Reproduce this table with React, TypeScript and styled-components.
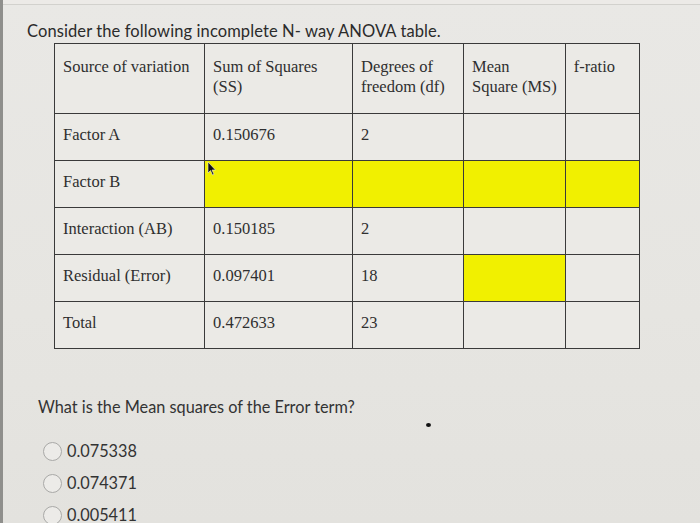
import React from "react";
import styled, { createGlobalStyle } from "styled-components";

const GlobalStyle = createGlobalStyle`
  html, body {
    margin: 0;
    padding: 0;
    background: #e6e5e1;
  }
`;

const Page = styled.div`
  position: relative;
  width: 697px;
  height: 523px;
  overflow: hidden;
  border-left: 3px solid #8f8f8c;
  background: linear-gradient(180deg, #e9e8e5 0%, #e6e5e1 60%, #e3e2de 100%);
  font-family: Lato, "Open Sans", sans-serif;
  color: #2b2b2b;
`;

const TopLine = styled.div`
  height: 4px;
  border-bottom: 1px solid #d2d1cd;
  background: #eceae7;
`;

const Title = styled.div`
  font-size: 16.5px;
  line-height: 20px;
  padding: 16px 0 0 24px;
  letter-spacing: 0.1px;
`;

const Table = styled.table`
  margin: 2px 0 0 51px;
  border-collapse: collapse;
  background: #ebeae6;
  font-family: "Liberation Serif", "Times New Roman", serif;
  font-size: 16.5px;
  line-height: 20px;
  color: #2f2f2f;
  table-layout: fixed;
`;

const Cell = styled.td<{ $hl?: boolean; $w?: number; $head?: boolean }>`
  width: ${(p) => (p.$w ? `${p.$w}px` : "auto")};
  height: ${(p) => (p.$head ? 70 : 47)}px;
  box-sizing: border-box;
  border: 1.5px solid #3a3a3a;
  background: ${(p) => (p.$hl ? "#f1f000" : "transparent")};
  vertical-align: top;
  white-space: nowrap;
  padding: ${(p) => (p.$head ? "13px 8px 0" : "11px 8px 0")};
`;

const Question = styled.div`
  margin: 48px 0 0 35px;
  font-size: 16.3px;
  line-height: 20px;
  color: #333;
`;

const Options = styled.div`
  margin: 24px 0 0 40px;
  display: flex;
  flex-direction: column;
  gap: 12px;
`;

const Option = styled.label`
  display: flex;
  align-items: center;
  gap: 5px;
  font-size: 16.3px;
  line-height: 20px;
  color: #333;
`;

const Radio = styled.span`
  width: 19px;
  height: 19px;
  border-radius: 50%;
  border: 1.5px solid #a9a9a7;
  background: #ecebe8;
  box-sizing: border-box;
`;

const Dot = styled.span`
  position: absolute;
  left: 423px;
  top: 423px;
  width: 5px;
  height: 4px;
  border-radius: 50%;
  background: #111;
`;

const Cursor = styled.svg`
  position: absolute;
  left: 204px;
  top: 162px;
`;

const header = [
  { text: ["Source of variation"], w: 150 },
  { text: ["Sum of Squares", "(SS)"], w: 148 },
  { text: ["Degrees of", "freedom (df)"], w: 111 },
  { text: ["Mean", "Square (MS)"], w: 101 },
  { text: ["f-ratio"], w: 74 },
];

type Row = { name: string; ss: string; df: string; hl: number[] };

const rows: Row[] = [
  { name: "Factor A", ss: "0.150676", df: "2", hl: [] },
  { name: "Factor B", ss: "", df: "", hl: [1, 2, 3, 4] },
  { name: "Interaction (AB)", ss: "0.150185", df: "2", hl: [] },
  { name: "Residual (Error)", ss: "0.097401", df: "18", hl: [3] },
  { name: "Total", ss: "0.472633", df: "23", hl: [] },
];

const answers = ["0.075338", "0.074371", "0.005411"];

export default function App() {
  return (
    <>
      <GlobalStyle />
      <Page>
        <TopLine />
        <Title>Consider the following incomplete N- way ANOVA table.</Title>
        <Table>
          <thead>
            <tr>
              {header.map((h) => (
                <Cell key={h.text[0]} $w={h.w} $head>
                  {h.text.map((t) => (
                    <div key={t}>{t}</div>
                  ))}
                </Cell>
              ))}
            </tr>
          </thead>
          <tbody>
            {rows.map((r) => {
              const cells = [r.name, r.ss, r.df, "", ""];
              return (
                <tr key={r.name}>
                  {cells.map((c, i) => (
                    <Cell key={i} $hl={r.hl.includes(i)}>
                      {c}
                    </Cell>
                  ))}
                </tr>
              );
            })}
          </tbody>
        </Table>
        <Question>What is the Mean squares of the Error term?</Question>
        <Options>
          {answers.map((a) => (
            <Option key={a}>
              <Radio />
              {a}
            </Option>
          ))}
        </Options>
        <Dot />
        <Cursor width="10" height="14" viewBox="0 0 10 14">
          <path d="M1 0 L1 11 L3.5 8.5 L5.5 13 L7 12.3 L5 8 L8.5 8 Z" fill="#111" stroke="#eee" strokeWidth="0.6" />
        </Cursor>
      </Page>
    </>
  );
}
